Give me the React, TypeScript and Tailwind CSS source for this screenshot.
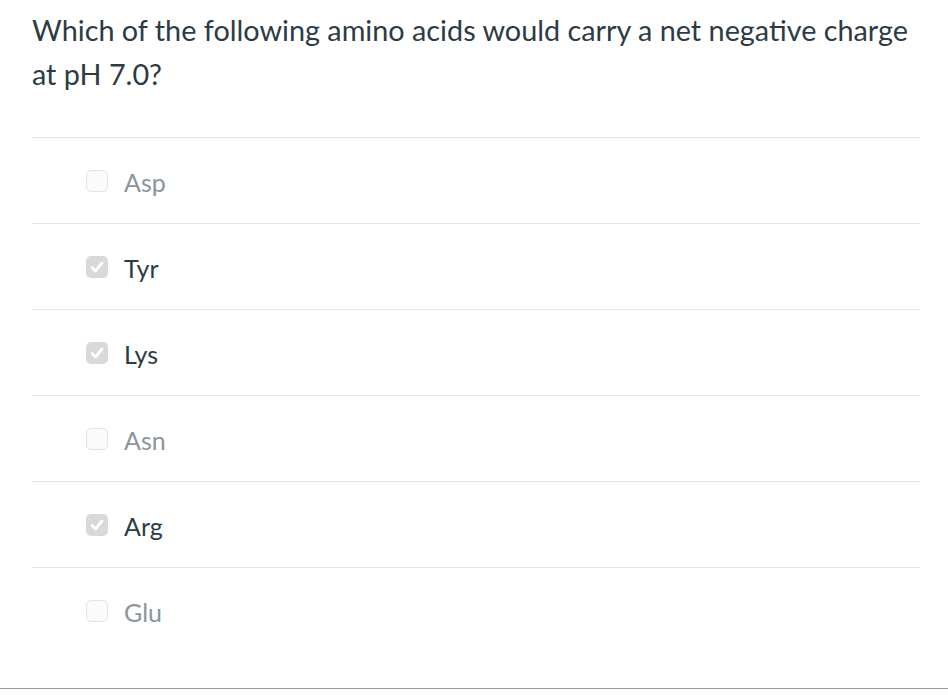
const options = [
  { label: "Asp", checked: false },
  { label: "Tyr", checked: true },
  { label: "Lys", checked: true },
  { label: "Asn", checked: false },
  { label: "Arg", checked: true },
  { label: "Glu", checked: false },
];

export default function App() {
  return (
    <div
      className="h-[689px] w-[948px] border-b border-[#9a9a9a] bg-white"
      style={{ fontFamily: "Lato, 'Open Sans', sans-serif" }}
    >
      <div className="pl-[32px] pr-[28px] pt-[8px]">
        <p className="text-[28.8px] leading-[44px] text-[#2d3b45]">
          Which of the following amino acids would carry a net negative charge
          at pH 7.0?
        </p>
        <div className="mt-[41px]">
          {options.map((o) => (
            <Option key={o.label} label={o.label} checked={o.checked} />
          ))}
        </div>
      </div>
    </div>
  );
}

function Option({ label, checked }: { label: string; checked: boolean }) {
  return (
    <div className="flex h-[86px] items-center border-t border-[#e5e5e5] pl-[54px]">
      {checked ? (
        <span className="flex h-[22px] w-[22px] items-center justify-center rounded-[5px] bg-[#d9d9d9]">
          <svg width="16" height="16" viewBox="0 0 16 16" fill="none">
            <path
              d="M3 8.5 L6.5 12 L13 4"
              stroke="white"
              strokeWidth="2.8"
              strokeLinecap="round"
              strokeLinejoin="round"
            />
          </svg>
        </span>
      ) : (
        <span className="h-[22px] w-[22px] rounded-[5px] border border-[#e3e3e3] bg-[#fbfbfb]" />
      )}
      <span
        className={`ml-[16px] pt-[4px] text-[25px] ${
          checked ? "text-[#2d3b45]" : "text-[#8c959c]"
        }`}
      >
        {label}
      </span>
    </div>
  );
}
